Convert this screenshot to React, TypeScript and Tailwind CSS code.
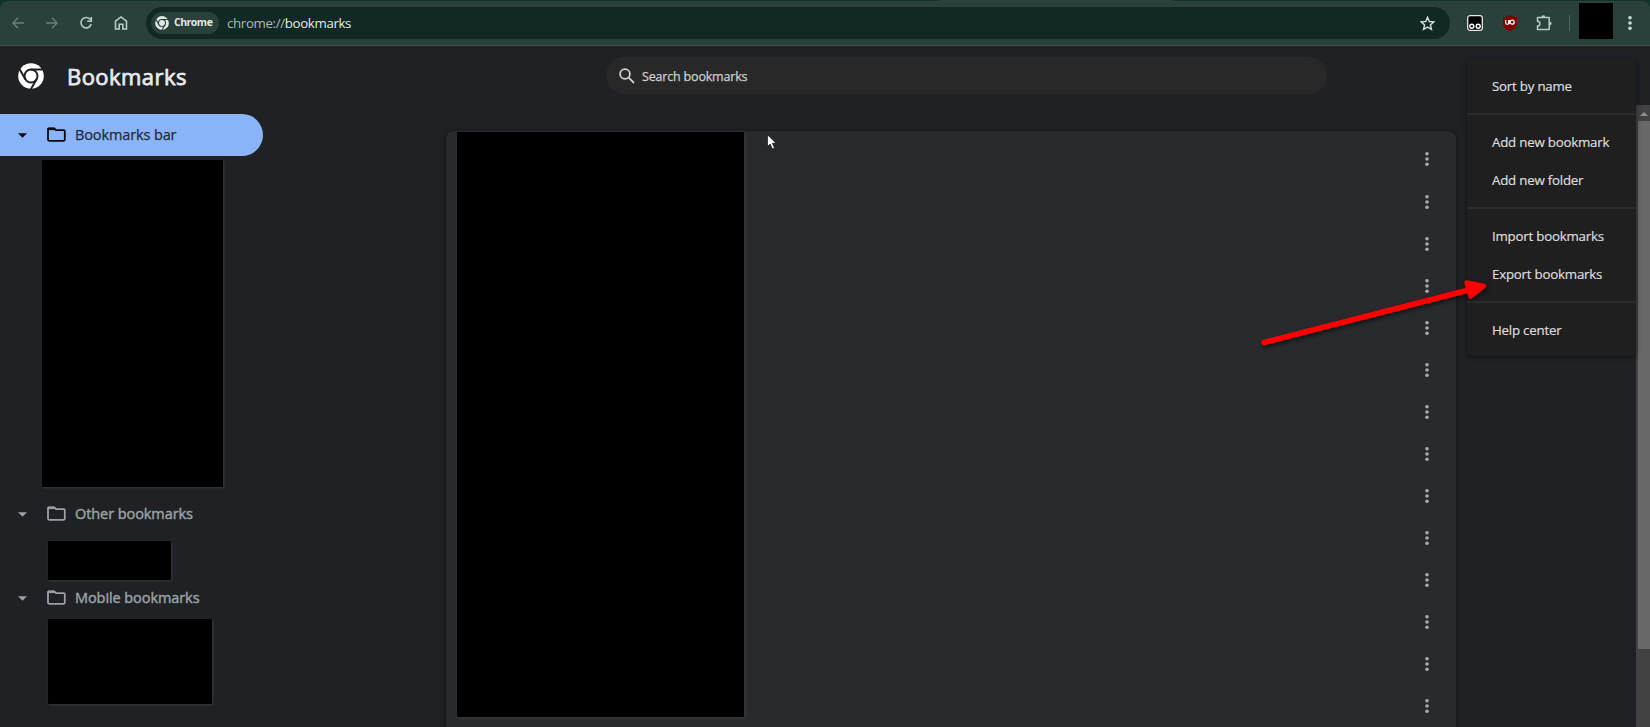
const menuGroups = [
    ["Sort by name"],
    ["Add new bookmark", "Add new folder"],
    ["Import bookmarks", "Export bookmarks"],
    ["Help center"],
];

const rows = Array.from({ length: 14 }, (_, i) => i);

const ChromeLogo = ({ className, cut }: { className: string; cut: string }) => (
    <svg viewBox="0 0 26 26" className={className}>
        <circle cx="13" cy="13" r="12.8" fill="currentColor" />
        <circle cx="13" cy="13" r="6.5" fill="none" stroke={cut} strokeWidth="2" />
        <g stroke={cut} strokeWidth="2">
            <path d="M13 6.5H24.8" />
            <path d="M7.4 16.3L1.5 6.1" />
            <path d="M18.6 16.3L12.7 26.5" />
        </g>
    </svg>
);

const FolderIcon = () => (
    <svg viewBox="0 0 19 15" className="w-[19px] h-[15px] shrink-0" fill="none" stroke="currentColor" strokeWidth="1.8">
        <path d="M1 2.2V12.6a1.2 1.2 0 0 0 1.2 1.2H16.6a1.2 1.2 0 0 0 1.2-1.2V4.3a1.2 1.2 0 0 0-1.2-1.2H9L7.3 1.3H1.9A.9.9 0 0 0 1 2.2Z" />
        <path d="M1 1.2H7L8.6 2.6H1Z" fill="currentColor" strokeWidth="1" />
    </svg>
);

const FolderRow = ({ label, selected = false }: { label: string; selected?: boolean }) => (
    <div
        className={
            selected
                ? "flex items-center w-[263px] h-[42px] pl-[18px] rounded-r-full bg-[#8ab4f8] text-[#08090c]"
                : "flex items-center w-[263px] h-[42px] pl-[18px] text-[#9aa0a6]"
        }
    >
        <svg viewBox="0 0 10 5" className="w-[9px] h-[5px] shrink-0" fill="currentColor">
            <path d="M0 0H10L5 5Z" />
        </svg>
        <span className="ml-5 -mt-px flex">
            <FolderIcon />
        </span>
        <span
            className={
                selected
                    ? "ml-[9px] text-[14.5px] tracking-[-0.12px] text-[#202a3c] whitespace-nowrap [-webkit-text-stroke:0.25px]"
                    : "ml-[9px] text-[14.5px] tracking-[-0.08px] whitespace-nowrap [-webkit-text-stroke:0.45px]"
            }
        >
            {label}
        </span>
    </div>
);

const Dots = ({ className }: { className: string }) => (
    <svg viewBox="0 0 4 16" className={className} fill="currentColor">
        <circle cx="2" cy="2.7" r="1.8" />
        <circle cx="2" cy="8" r="1.8" />
        <circle cx="2" cy="13.3" r="1.8" />
    </svg>
);

const Toolbar = () => (
    <header className="h-[46px] shrink-0 bg-[#11332c]">
        {/* Bottom edge of the active tab */}
        <div className="ml-[939px] w-[234px] h-px bg-[#29403b]" />
        <div className="flex items-center h-[45px] bg-[#29403b] rounded-t-lg border-b border-[#46514e] text-[#b4cdc6]">
            <div className="flex items-center w-[146px] pl-3 gap-[22px] shrink-0">
                <svg viewBox="0 0 12 12" className="w-3 h-3 text-[#6a7f79]" fill="none" stroke="currentColor" strokeWidth="1.4">
                    <path d="M12 6H1M6 .8L.9 6L6 11.2" />
                </svg>
                <svg viewBox="0 0 12 12" className="w-3 h-3 text-[#6a7f79]" fill="none" stroke="currentColor" strokeWidth="1.4">
                    <path d="M0 6H11M6 .8L11.1 6L6 11.2" />
                </svg>
                <svg viewBox="0 0 12 12" className="w-3 h-3 overflow-visible" fill="none" stroke="currentColor" strokeWidth="1.6">
                    <path d="M10.4 2.6A5.2 5.2 0 1 0 11.2 7M11.3 0V4.2H7.2" />
                </svg>
                <svg viewBox="0 0 12 14" className="ml-px w-3 h-3.5 overflow-visible" fill="none" stroke="currentColor" strokeWidth="1.6">
                    <path d="M.5 13V5.2L6 .9L11.5 5.2V13H7.8V8.2H4.2V13Z" />
                </svg>
            </div>
            <div className="flex items-center w-[1304px] h-8 rounded-full bg-[#122824] pl-[5px] pr-[15px]">
                <div className="flex items-center w-[68px] h-[22px] rounded-full bg-[#29403b] pl-1">
                    <ChromeLogo className="w-3.5 h-3.5 text-[#dfe8e5]" cut="#29403b" />
                    <span className="ml-[5px] text-[10.5px] font-bold text-[#e0e8e5] tracking-[-0.5px]">Chrome</span>
                </div>
                <span className="ml-2 mt-px text-[13.3px] tracking-[-0.36px] text-[#a9bcb7]">
                    chrome://<span className="text-[#e3ebe8]">bookmarks</span>
                </span>
                <svg viewBox="0 0 16 16" className="ml-auto w-[15px] h-[15px] text-[#d3e0dc]" fill="none" stroke="currentColor" strokeWidth="1.5">
                    <path d="M8 1.4L9.9 5.9L14.8 6.3L11.1 9.5L12.2 14.3L8 11.8L3.8 14.3L4.9 9.5L1.2 6.3L6.1 5.9Z" />
                </svg>
            </div>
            <svg viewBox="0 0 16 16" className="ml-[17px] w-4 h-4 shrink-0">
                <rect x=".7" y=".7" width="14.6" height="14.6" rx="2.3" fill="#000" stroke="#e6e6e6" strokeWidth="1.3" />
                <g fill="#111" stroke="#fff" strokeWidth="1.4">
                    <circle cx="4.8" cy="11.2" r="2" />
                    <circle cx="11.2" cy="11.2" r="2" />
                </g>
            </svg>
            <svg viewBox="0 0 14 16" className="ml-5 w-[14px] h-4 shrink-0">
                <path d="M7 0C5 1.5 2.5 2 0 2V8C0 12 3 14.5 7 16C11 14.5 14 12 14 8V2C11.5 2 9 1.5 7 0Z" fill="#800000" />
                <path d="M2.7 5V7.8A1.5 1.5 0 0 0 5.7 7.8V5M6.3 5V9.3" fill="none" stroke="#fff" strokeWidth="1.2" />
                <circle cx="9.2" cy="7.2" r="2" fill="none" stroke="#fff" strokeWidth="1.2" />
            </svg>
            <svg viewBox="0 0 16 16" className="ml-[19px] w-4 h-4 shrink-0" fill="none" stroke="currentColor" strokeWidth="1.5">
                <path d="M1.5 2.6H13.2V14.5H1.5V11A2.3 2.3 0 0 0 1.5 6.3Z" strokeLinejoin="round" />
                <path d="M5.6 2.2A1.7 1.7 0 0 1 9.2 2.2ZM13.6 6.7A1.7 1.7 0 0 1 13.6 10.2Z" fill="currentColor" strokeWidth=".5" />
            </svg>
            <div className="ml-[17px] w-px h-4 bg-[#4a645d]" />
            <div className="ml-[9px] -mt-[4px] w-[34px] h-9 bg-black rounded-[1px]" />
            <Dots className="ml-[15px] w-1 h-4 text-[#c8dcd6]" />
        </div>
    </header>
);

const Menu = () => (
    <div className="absolute left-[1467px] top-[59px] w-[169px] h-[297px] pt-2 rounded bg-[#1f1f1f] shadow-[0_1px_5px_rgba(0,0,0,0.5)] text-[13.3px] text-[#dcdcdc] tracking-[-0.22px] [-webkit-text-stroke:0.2px]">
        {menuGroups.map((group, i) => (
            <div key={group[0]} className={i ? "border-t-2 border-[#2c2c2c] pt-2 pb-2" : "pb-2"}>
                {group.map((item) => (
                    <div key={item} className="h-[38px] flex items-center pl-[25px] pt-px whitespace-nowrap">
                        {item}
                    </div>
                ))}
            </div>
        ))}
    </div>
);

export default function App() {
    return (
        <div
            className="relative w-[1650px] h-[727px] overflow-hidden flex flex-col bg-[#202124]"
            style={{ fontFamily: "'Open Sans', 'Noto Sans', sans-serif" }}
        >
            <Toolbar />
            <div className="flex items-center h-[59px] shrink-0 pl-[18px] text-[#e8eaed]">
                <ChromeLogo className="w-[26px] h-[26px] mt-px text-white" cut="#202124" />
                <h1 className="ml-[23px] w-[539px] text-[22px] leading-none tracking-[0.45px] [-webkit-text-stroke:0.75px]">Bookmarks</h1>
                <div className="flex items-center w-[721px] h-[37px] rounded-full bg-[#282828] pl-[13px] text-[#cfcfcf]">
                    <svg viewBox="0 0 16 16" className="w-4 h-4" fill="none" stroke="currentColor" strokeWidth="1.8">
                        <circle cx="6" cy="6" r="4.9" />
                        <path d="M9.7 9.7L15 15" />
                    </svg>
                    <span className="ml-[7px] mt-[3px] text-[12.5px] tracking-[-0.18px] [-webkit-text-stroke:0.25px]">Search bookmarks</span>
                </div>
            </div>

            <div className="flex flex-1 min-h-0">
                <nav className="w-[446px] shrink-0 pt-[9px]">
                    <FolderRow label="Bookmarks bar" selected />
                    <div className="ml-[42px] mt-1 w-[181px] h-[327px] bg-black rounded-[1px] shadow-[1px_1px_3px_#3a3a3a]" />
                    <div className="mt-1.5">
                        <FolderRow label="Other bookmarks" />
                    </div>
                    <div className="ml-12 mt-[6px] w-[123px] h-[39px] bg-black rounded-[1px] shadow-[1px_1px_3px_#3a3a3a]" />
                    <div className="-mt-[3px]">
                        <FolderRow label="Mobile bookmarks" />
                    </div>
                    <div className="ml-12 w-[164px] h-[85px] bg-black rounded-[1px] shadow-[1px_1px_3px_#3a3a3a]" />
                </nav>

                <main className="mt-[26px] w-[1010px] shrink-0 flex justify-between rounded-t-lg bg-[#292a2d] shadow-[0_1px_5px_rgba(0,0,0,0.5)] pl-[11px] pr-[27px]">
                    <div className="mt-px w-[287px] h-[585px] bg-black rounded-[1px] shadow-[1px_1px_4px_#3c3c3a]" />
                    <div className="pt-[7.4px]">
                        {rows.map((row) => (
                            <div key={row} className="h-[42.08px] flex items-center text-[#a9abae]">
                                <Dots className="w-1 h-4" />
                            </div>
                        ))}
                    </div>
                </main>

                {/* Scrollbar */}
                <div className="ml-auto w-[14px] bg-[#424242]">
                    <div className="h-4 flex items-center justify-center pt-px">
                        <svg viewBox="0 0 8 4" className="w-2 h-1 ml-0.5" fill="#8d8d8d">
                            <path d="M4 0L8 4H0Z" />
                        </svg>
                    </div>
                    <div className="ml-0.5 h-[528px] bg-[#686868]" />
                </div>
            </div>

            <Menu />

            {/* Arrow pointing at the export item */}
            <svg viewBox="0 0 240 80" className="absolute left-[1255px] top-[272px] w-[240px] h-[80px] drop-shadow-[1px_2px_2px_rgba(0,0,0,0.6)]" fill="#f00" stroke="#f00" strokeLinejoin="round" strokeLinecap="round">
                <path d="M9 70.5L212 18.5" strokeWidth="5.5" />
                <path d="M211.5 10.5L229 14L215.5 24.5Z" strokeWidth="4.5" />
            </svg>

            <svg viewBox="0 0 10 16" className="absolute left-[767px] top-[134px] w-[10px] h-4">
                <path d="M.5 .8V12.5L3.2 10L5.3 15L7.5 14L5.4 9.3H9Z" fill="#fff" stroke="#111" strokeWidth=".7" />
            </svg>
        </div>
    );
}
